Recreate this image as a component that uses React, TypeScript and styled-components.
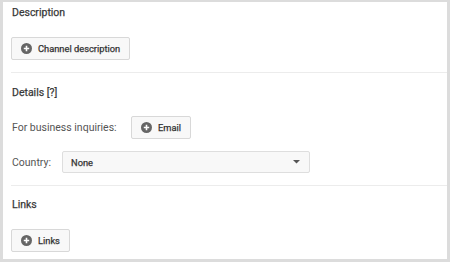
import React from "react";
import styled, { createGlobalStyle } from "styled-components";

const Global = createGlobalStyle`
  html, body { margin: 0; padding: 0; background: #fff; }
  body { font-family: Roboto, "Liberation Sans", Arial, sans-serif; }
  * { box-sizing: border-box; }
`;

const Frame = styled.div`
  width: 450px;
  height: 262px;
  border-style: solid;
  border-color: #dcdcdc;
  border-width: 2px 3px 3px 3px;
  background: #fff;
  display: flex;
  flex-direction: column;
  overflow: hidden;
`;

const Section = styled.section<{ $top: number; $bottom: number; $last?: boolean }>`
  margin-left: 8px;
  padding: ${(p) => p.$top}px 0 ${(p) => p.$bottom}px 1px;
  border-bottom: ${(p) => (p.$last ? "none" : "1px solid #ececec")};
  display: flex;
  flex-direction: column;
  align-items: flex-start;
`;

const Heading = styled.h2<{ $gap: number }>`
  margin: 0 0 ${(p) => p.$gap}px 0;
  font-size: 10.5px;
  line-height: 14px;
  font-weight: 400;
  color: #383838;
  -webkit-text-stroke: 0.25px #383838;
`;

const Row = styled.div<{ $gap?: number }>`
  display: flex;
  align-items: center;
  margin-top: ${(p) => p.$gap ?? 0}px;
`;

const Label = styled.span<{ $w: number }>`
  width: ${(p) => p.$w}px;
  font-size: 10.5px;
  color: #555;
  font-weight: 400;
`;

const Button = styled.button`
  height: 23px;
  display: inline-flex;
  align-items: center;
  gap: 6px;
  padding: 0 9px 0 9px;
  margin: 0 0 0 -1px;
  background: #f8f8f8;
  border: 1px solid #d8d8d8;
  border-radius: 2px;
  font-family: inherit;
  font-size: 9.3px;
  font-weight: 400;
  color: #333;
  -webkit-text-stroke: 0.25px #333;
  cursor: pointer;
`;

const Select = styled.div`
  width: 248px;
  height: 22px;
  display: flex;
  align-items: center;
  justify-content: space-between;
  padding: 0 9px 0 8px;
  background: #f8f8f8;
  border: 1px solid #dedede;
  border-radius: 2px;
  font-size: 9.3px;
  font-weight: 400;
  color: #333;
  -webkit-text-stroke: 0.25px #333;
`;

const PlusIcon = () => (
  <svg width="11" height="11" viewBox="0 0 11 11">
    <circle cx="5.5" cy="5.5" r="5.5" fill="#666" />
    <path d="M5.5 2.8v5.4M2.8 5.5h5.4" stroke="#fff" strokeWidth="1.6" />
  </svg>
);

const Caret = () => (
  <svg width="7" height="4" viewBox="0 0 7 4">
    <path d="M0 0h7L3.5 3.5z" fill="#555" />
  </svg>
);

export default function App() {
  return (
    <>
      <Global />
      <Frame>
        <Section $top={4} $bottom={12}>
          <Heading $gap={17}>Description</Heading>
          <Button>
            <PlusIcon />
            Channel description
          </Button>
        </Section>
        <Section $top={13} $bottom={12}>
          <Heading $gap={16}>Details [?]</Heading>
          <Row>
            <Label $w={120}>For business inquiries:</Label>
            <Button>
              <PlusIcon />
              Email
            </Button>
          </Row>
          <Row $gap={12}>
            <Label $w={50}>Country:</Label>
            <Select>
              None
              <Caret />
            </Select>
          </Row>
        </Section>
        <Section $top={12} $bottom={7} $last>
          <Heading $gap={17}>Links</Heading>
          <Button>
            <PlusIcon />
            Links
          </Button>
        </Section>
      </Frame>
    </>
  );
}
